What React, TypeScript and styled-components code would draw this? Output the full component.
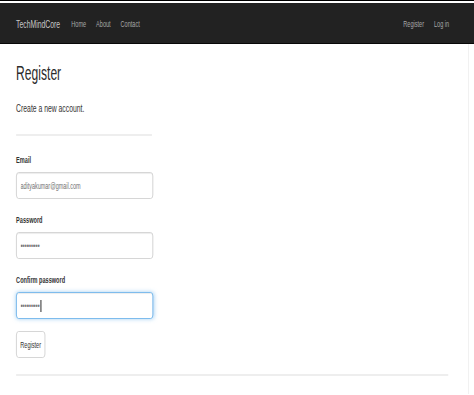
import React from "react";
import styled, { createGlobalStyle } from "styled-components";

// the screenshot is squeezed sideways, so the page is laid out wide and scaled on x
const SQUEEZE = 0.62;

const GlobalStyle = createGlobalStyle`
  html, body {
    margin: 0;
    padding: 0;
    overflow: hidden;
    background: #fff;
  }
  body {
    font-family: "Liberation Sans", Arial, sans-serif;
    color: #333;
  }
`;

const Frame = styled.div`
  width: ${474 / SQUEEZE}px;
  transform: scaleX(${SQUEEZE});
  transform-origin: 0 0;
  border-top: 1px solid #000;
  padding-top: 2px;
`;

const Navbar = styled.nav`
  display: flex;
  align-items: center;
  height: 41px;
  padding: 1px 32px 0 26px;
  box-sizing: border-box;
  background: #222;
  border-bottom: 1px solid #080808;
`;

const Brand = styled.a`
  font-size: 11px;
  color: #c8c8c8;
  text-decoration: none;
  margin-right: 10px;
`;

const NavList = styled.ul`
  display: flex;
  margin: 0;
  padding: 0;
  list-style: none;
  margin-left: ${(p: { $right?: boolean }) => (p.$right ? "auto" : "0")};
`;

const NavLink = styled.a`
  display: block;
  padding: 0 8px;
  font-size: 9px;
  color: #a8a8a8;
  text-decoration: none;
`;

const Main = styled.main`
  width: ${469 / SQUEEZE}px;
  min-height: 350px;
  box-sizing: border-box;
  padding: 19px 0 0 26px;
  border-right: 1.6px solid #e8e8e8;
`;

const Title = styled.h2`
  margin: 0;
  font-size: 19.5px;
  line-height: 21px;
  font-weight: 400;
  color: #2b2b2b;
`;

const Subtitle = styled.h4`
  margin: 18px 0 0;
  font-size: 11px;
  line-height: 12px;
  font-weight: 400;
  color: #333;
`;

const Rule = styled.hr<{ $wide?: boolean }>`
  width: ${(p) => (p.$wide ? 697 : 219)}px;
  height: 2px;
  margin: ${(p) => (p.$wide ? "16px 0 0" : "20px 0 19px")};
  border: 0;
  background: #eeeeee;
`;

const FormGroup = styled.div`
  & + & {
    margin-top: 16px;
  }
`;

const Label = styled.label`
  display: block;
  margin-bottom: 7px;
  font-size: 9px;
  line-height: 10px;
  font-weight: 700;
  color: #333;
`;

const Field = styled.div`
  position: relative;
  width: 221px;
`;

const Input = styled.input<{ $focus?: boolean }>`
  display: block;
  width: 221px;
  height: 27px;
  box-sizing: border-box;
  padding: 0 6px;
  border: 1px solid ${(p) => (p.$focus ? "#66afe9" : "#cccccc")};
  border-left-width: 1.6px;
  border-right-width: 1.6px;
  border-radius: 4px;
  background: #fff;
  font-family: "Liberation Sans", Arial, sans-serif;
  font-size: 8.8px;
  color: #707070;
  outline: none;
  box-shadow: inset 0 1px 1px rgba(0, 0, 0, 0.075)
    ${(p) => (p.$focus ? ", 0 0 6px rgba(102, 175, 233, 0.6)" : "")};
`;

const Caret = styled.span`
  position: absolute;
  left: 39px;
  top: 8px;
  width: 1.6px;
  height: 12px;
  background: #555;
`;

const SubmitButton = styled.button`
  display: block;
  width: 47px;
  height: 27px;
  margin-top: 12px;
  padding: 0;
  border: 1px solid #cccccc;
  border-left-width: 1.6px;
  border-right-width: 1.6px;
  border-radius: 4px;
  background: #fff;
  font-family: "Liberation Sans", Arial, sans-serif;
  font-size: 9px;
  color: #333;
`;

function App() {
  return (
    <>
      <GlobalStyle />
      <Frame>
        <Navbar>
          <Brand href="#">TechMindCore</Brand>
          <NavList>
            <li><NavLink href="#">Home</NavLink></li>
            <li><NavLink href="#">About</NavLink></li>
            <li><NavLink href="#">Contact</NavLink></li>
          </NavList>
          <NavList $right>
            <li><NavLink href="#">Register</NavLink></li>
            <li><NavLink href="#">Log in</NavLink></li>
          </NavList>
        </Navbar>
        <Main>
          <Title>Register</Title>
          <Subtitle>Create a new account.</Subtitle>
          <Rule />
          <form onSubmit={(e) => e.preventDefault()}>
            <FormGroup>
              <Label>Email</Label>
              <Input type="email" defaultValue="adityakumar@gmail.com" readOnly />
            </FormGroup>
            <FormGroup>
              <Label>Password</Label>
              <Input type="password" defaultValue="password12" readOnly />
            </FormGroup>
            <FormGroup>
              <Label>Confirm password</Label>
              <Field>
                <Input $focus type="password" defaultValue="password12" readOnly />
                <Caret />
              </Field>
            </FormGroup>
            <SubmitButton type="submit">Register</SubmitButton>
          </form>
          <Rule $wide />
        </Main>
      </Frame>
    </>
  );
}

export default App;
